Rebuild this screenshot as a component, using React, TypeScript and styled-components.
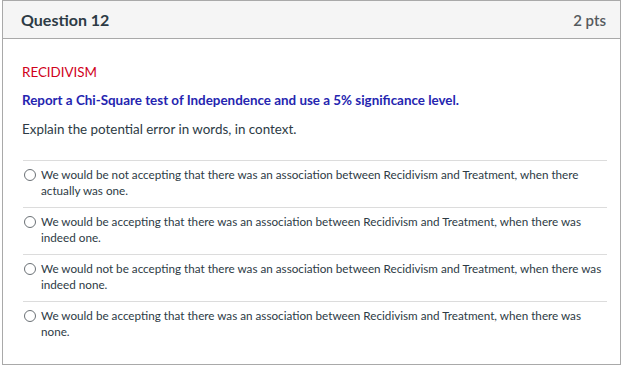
import React from "react";
import styled, { createGlobalStyle } from "styled-components";

const Global = createGlobalStyle`
  html, body { margin: 0; padding: 0; background: #fff; }
  body { font-family: Lato, "Noto Sans", sans-serif; color: #2d3b45; }
`;

const Card = styled.div`
  margin-left: 2px;
  width: 619px;
  height: 365px;
  box-sizing: border-box;
  border: 1px solid #a9a9a9;
  display: flex;
  flex-direction: column;
`;

const Header = styled.div`
  height: 38px;
  box-sizing: border-box;
  background: #f5f5f5;
  border-bottom: 1px solid #a9a9a9;
  display: flex;
  align-items: center;
  justify-content: space-between;
  padding: 0 14px 0 18px;
`;

const Title = styled.div`
  font-size: 16px;
  font-weight: 700;
  color: #2d3b45;
`;

const Points = styled.div`
  font-size: 15px;
  font-weight: 600;
  color: #555a5e;
`;

const Body = styled.div`
  padding: 24px 13px 0 17px;
  display: flex;
  flex-direction: column;
`;

const Line = styled.div<{ $color: string; $bold?: boolean; $gap: number }>`
  font-size: 13.4px;
  line-height: 18px;
  color: ${(p) => p.$color};
  font-weight: ${(p) => (p.$bold ? 700 : 400)};
  margin-bottom: ${(p) => p.$gap}px;
  padding-left: 2px;
`;

const Answers = styled.div`
  display: flex;
  flex-direction: column;
  padding-left: 3px;
`;

const Answer = styled.div`
  border-top: 1px solid #dcdcdc;
  padding: 5px 0 9px 0;
  display: flex;
  align-items: flex-start;
`;

const Radio = styled.span`
  flex: none;
  width: 10px;
  height: 10px;
  border: 1px solid #6b7176;
  border-radius: 50%;
  margin: 3px 5px 0 1px;
  box-sizing: content-box;
`;

const AnswerText = styled.div`
  font-size: 11.7px;
  line-height: 16px;
  color: #2d3b45;
  flex: 1;
`;

const answers = [
  "We would be not accepting that there was an association between Recidivism and Treatment, when there actually was one.",
  "We would be accepting that there was an association between Recidivism and Treatment, when there was indeed one.",
  "We would not be accepting that there was an association between Recidivism and Treatment, when there was indeed none.",
  "We would be accepting that there was an association between Recidivism and Treatment, when there was none.",
];

export default function App() {
  return (
    <>
      <Global />
      <Card>
        <Header>
          <Title>Question 12</Title>
          <Points>2 pts</Points>
        </Header>
        <Body>
          <Line $color="#d0021b" $gap={10}>RECIDIVISM</Line>
          <Line $color="#2525b0" $bold $gap={11}>
            Report a Chi-Square test of Independence and use a 5% significance level.
          </Line>
          <Line $color="#2d3b45" $gap={22}>
            Explain the potential error in words, in context.
          </Line>
          <Answers>
            {answers.map((a) => (
              <Answer key={a}>
                <Radio />
                <AnswerText>{a}</AnswerText>
              </Answer>
            ))}
          </Answers>
        </Body>
      </Card>
    </>
  );
}
